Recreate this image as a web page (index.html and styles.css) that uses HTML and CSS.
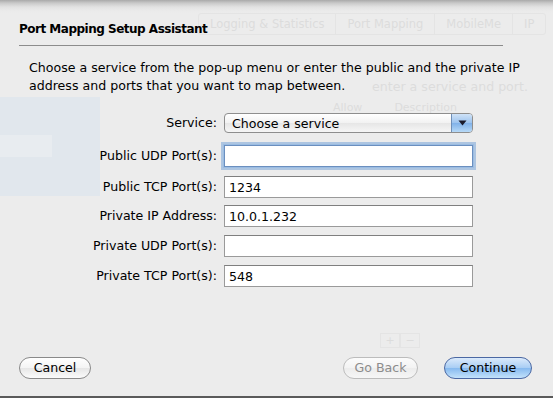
FILE: index.html
```html
<!DOCTYPE html>
<html lang="en">
<head>
    <meta charset="UTF-8">
    <title>Port Mapping Setup Assistant</title>
    <link rel="stylesheet" href="styles.css">
</head>
<body>
    <div class="window">
        <!-- faded window content behind the sheet -->
        <div class="ghost" aria-hidden="true">
            <div class="ghost-tabs">
                <span>Logging &amp; Statistics</span>
                <span>Port Mapping</span>
                <span>MobileMe</span>
                <span>IP</span>
            </div>
            <div class="ghost-hint">enter a service and port.</div>
            <div class="ghost-cols"><span>Allow</span><span>Description</span></div>
            <div class="ghost-panel"><div class="ghost-box"></div></div>
            <div class="ghost-plus"><span>+</span><span>&minus;</span></div>
        </div>

        <div class="sheet">
            <h1>Port Mapping Setup Assistant</h1>
            <p class="intro">
                <span>Choose a service from the pop-up menu or enter the public and the private IP</span>
                <span>address and ports that you want to map between.</span>
            </p>

            <form class="fields">
                <label>Service:</label>
                <div class="popup">
                    <span>Choose a service</span>
                    <span class="popup-arrow"><svg width="9" height="6" viewBox="0 0 9 6"><path d="M0.5 0.5h8L4.5 5.5z" fill="#1a1a2a"/></svg></span>
                </div>

                <label>Public UDP Port(s):</label>
                <div class="field focused"></div>

                <label>Public TCP Port(s):</label>
                <div class="field">1234</div>

                <label>Private IP Address:</label>
                <div class="field">10.0.1.232</div>

                <label>Private UDP Port(s):</label>
                <div class="field"></div>

                <label>Private TCP Port(s):</label>
                <div class="field">548</div>
            </form>

            <div class="buttons">
                <button type="button" class="btn cancel">Cancel</button>
                <div class="right">
                    <button type="button" class="btn disabled">Go Back</button>
                    <button type="button" class="btn default">Continue</button>
                </div>
            </div>
        </div>
    </div>
</body>
</html>
```

FILE: styles.css
```css
:root {
    --background: #ececec;
    --text: #000000;
    --ghost: #dcdcdc;
    --rule: #8c8c8c;
    --field-border: #9a9a9a;
}
body {
    margin: 0;
    background: var(--background);
    font-family: "DejaVu Sans", Verdana, sans-serif;
    font-size: 12.6px;
    color: var(--text);
}
.window {
    position: relative;
    width: 553px;
    height: 398px;
    overflow: hidden;
    background: linear-gradient(#a9a9a9 0, #c9c9c9 3px, #e2e2e2 7px, #ebebeb 11px, #ececec 14px);
    border-bottom: 2px solid #5a5a5a;
    box-sizing: border-box;
}

/* ghost layer */
.ghost {
    position: absolute;
    inset: 0;
    color: var(--ghost);
    font-size: 11.5px;
    white-space: nowrap;
}
.ghost-tabs {
    position: absolute;
    top: 13px;
    left: 198px;
    display: flex;
    border: 1px solid #e4e4e4;
    border-radius: 3px;
    height: 20px;
    line-height: 20px;
}
.ghost-tabs span {
    padding: 0 11px;
    border-left: 1px solid #e4e4e4;
}
.ghost-tabs span:first-child {
    border-left: none;
}
.ghost-hint {
    position: absolute;
    top: 79px;
    left: 372px;
    font-size: 12.6px;
}
.ghost-cols {
    position: absolute;
    top: 101px;
    left: 333px;
    display: flex;
    gap: 32px;
    font-size: 11px;
}
.ghost-panel {
    position: absolute;
    top: 97px;
    left: 0;
    width: 100px;
    height: 99px;
    background: #e1e7ed;
}
.ghost-box {
    margin-top: 38px;
    width: 52px;
    height: 22px;
    background: #e8ecf0;
}
.ghost-plus {
    position: absolute;
    top: 333px;
    left: 380px;
    display: flex;
    font-size: 11px;
}
.ghost-plus span {
    width: 18px;
    text-align: center;
    border: 1px solid #e4e4e4;
}

/* sheet */
.sheet {
    position: relative;
    padding: 22px 21px 0 19px;
}
h1 {
    margin: 0;
    padding-bottom: 8px;
    width: 484px;
    font-size: 12px;
    font-weight: bold;
    letter-spacing: -0.5px;
    border-bottom: 1px solid var(--rule);
    line-height: 15px;
}
.intro {
    margin: 13px 0 0 10px;
    line-height: 18px;
}
.intro span {
    display: block;
    width: fit-content;
    white-space: nowrap;
}

.fields {
    display: grid;
    grid-template-columns: 198px 249px;
    grid-template-rows: 25px 23px 21px 22px 22px 22px;
    column-gap: 7px;
    row-gap: 8px;
    margin: 17px 0 0 0;
    align-items: start;
}
.fields label {
    text-align: right;
    line-height: 22px;
}
.popup {
    display: flex;
    align-items: center;
    justify-content: space-between;
    margin-top: 1px;
    height: 20px;
    box-sizing: border-box;
    border: 1px solid #8e8e8e;
    border-radius: 4px;
    background: linear-gradient(#ffffff, #f2f2f2 50%, #e6e6e6 51%, #f6f6f6);
    padding-left: 7px;
    overflow: hidden;
}
.popup-arrow {
    width: 20px;
    height: 100%;
    display: flex;
    align-items: center;
    justify-content: center;
    background: linear-gradient(#cfe2f7, #9cc3ee 50%, #80b1e8 51%, #b7d9f7);
    border-left: 1px solid #6f8fb8;
}
.field {
    height: 22px;
    box-sizing: border-box;
    border: 1px solid var(--field-border);
    border-top-color: #7f7f7f;
    background: #ffffff;
    padding: 3px 4px 0;
    line-height: 16px;
}
.field.focused {
    border-color: #6b8fbf;
    box-shadow: 0 0 0 1px #9bbde3, 0 0 0 3px rgba(122, 166, 217, 0.55);
}

.buttons {
    display: flex;
    justify-content: space-between;
    margin-top: 70px;
    width: 513px;
}
.right {
    display: flex;
    gap: 26px;
}
.btn {
    height: 22px;
    padding: 0;
    border: 1px solid #8a8a8a;
    border-radius: 11px;
    background: linear-gradient(#ffffff, #f4f4f4 50%, #e6e6e6 51%, #fbfbfb);
    font-family: inherit;
    font-size: 12.6px;
    color: #000;
    line-height: 18px;
}
.btn.cancel {
    width: 72px;
}
.btn.disabled {
    width: 75px;
    color: #8c8c8c;
    border-color: #bcbcbc;
    background: linear-gradient(#fbfbfb, #f3f3f3 50%, #ececec 51%, #f6f6f6);
}
.btn.default {
    width: 88px;
    border-color: #4b68a3;
    background: linear-gradient(#dbeafb, #a8cdf4 50%, #86b9ef 51%, #c3e2fb);
}
```
